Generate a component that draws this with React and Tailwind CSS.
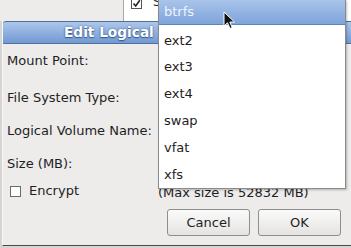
import React from "react";

const fsTypes = ["ext2", "ext3", "ext4", "swap", "vfat", "xfs"];

const App = () => {
  return (
    <div
      className="relative w-[351px] h-[248px] overflow-hidden bg-[#d6d5d3] text-[13px] text-[#1e1e1e]"
      style={{ fontFamily: '"DejaVu Sans", sans-serif' }}
    >
      {/* window behind the dialog */}
      <div className="flex h-[21px] bg-[#edeceb]">
        <div className="w-[123px]" />
        <div className="flex flex-1 items-start border-l border-[#a8a8a8] bg-white pl-[7px]">
          <div className="mt-[-2px] flex h-[11px] w-[11px] items-center justify-center border border-[#555] bg-white">
            <svg width="9" height="9" viewBox="0 0 9 9">
              <path d="M1.5 4.5 L3.7 7 L7.8 1.2" fill="none" stroke="#222" strokeWidth="1.6" />
            </svg>
          </div>
          <span className="ml-[11px] mt-[-6px] leading-[16px]">S</span>
        </div>
      </div>

      {/* dialog */}
      <div className="ml-[2px] flex h-[225px] flex-col border-l border-b border-[#f7f7f6] border-b-[#4a4a4a] bg-[#edeceb]">
        <div className="flex h-[23px] items-center rounded-tl-[3px] border-t border-b border-[#4f6f9f] bg-gradient-to-b from-[#adc7ea] to-[#7199d3] pl-[61px]">
          <span
            className="text-[13.7px] font-bold text-white"
            style={{ textShadow: "0 0 2px #3c5a8a, 0 1px 1px #3c5a8a" }}
          >
            Edit Logical Volume
          </span>
        </div>

        <div className="flex flex-col pl-[4px]">
          <div className="flex h-[33px] items-center">Mount Point:</div>
          <div className="flex h-[41px] items-center">File System Type:</div>
          <div className="flex h-[25px] items-center">Logical Volume Name:</div>
          <div className="flex h-[41px] items-center">Size (MB):</div>
          <div className="flex h-[14px] items-center">
            <div className="flex w-[151px] items-center pl-[3px]">
              <div className="h-[11px] w-[11px] border border-[#6a6a6a] bg-white" />
              <span className="ml-[8px]">Encrypt</span>
            </div>
            <span className="mt-[3px]">(Max size is 52832 MB)</span>
          </div>
        </div>

        <div className="mt-[11px] flex gap-[8px] pl-[164px]">
          <button className="h-[27px] w-[83px] rounded-[3px] border border-[#8e8e8e] bg-gradient-to-b from-[#fbfbfb] to-[#e4e3e1]">
            Cancel
          </button>
          <button className="h-[27px] w-[83px] rounded-[3px] border border-[#8e8e8e] bg-gradient-to-b from-[#fbfbfb] to-[#e4e3e1]">
            OK
          </button>
        </div>
      </div>

      {/* open combo box list */}
      <div className="absolute left-[158px] top-0 w-[188px] border border-t-0 border-[#8a8a8a] bg-white pt-[2px] shadow-[1px_1px_2px_rgba(0,0,0,0.25)]">
        <div className="-mt-[2px] mb-[2px] flex h-[25px] items-center border-b border-[#5d84bd] bg-gradient-to-b from-[#a9c4ea] to-[#7ea4da] pl-[5px] text-[#eef3fb]">
          btrfs
        </div>
        {fsTypes.map((t) => (
          <div key={t} className="flex h-[26.8px] items-center pl-[5px]">
            {t}
          </div>
        ))}
      </div>

      {/* mouse pointer */}
      <svg className="absolute left-[223px] top-[11px]" width="14" height="20" viewBox="0 0 14 20">
        <path
          d="M1 1 L1 15 L4.5 11.8 L7 17.5 L9.2 16.5 L6.8 11 L11.5 11 Z"
          fill="#111"
          stroke="#fff"
          strokeWidth="1"
          strokeLinejoin="round"
        />
      </svg>
    </div>
  );
};

export default App;
